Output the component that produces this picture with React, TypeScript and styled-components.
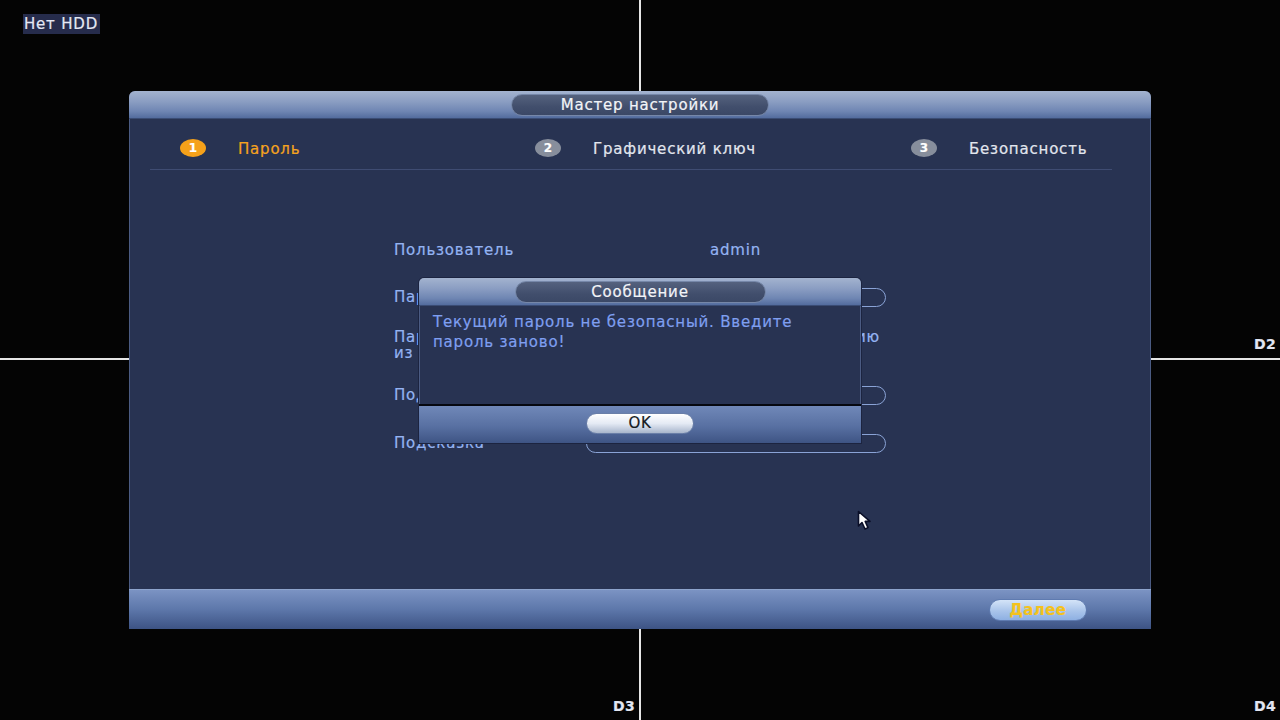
import React from "react";
import styled, {createGlobalStyle} from "styled-components";

const GlobalStyle = createGlobalStyle`
  html, body {
    margin: 0;
    padding: 0;
    background: #000;
  }
  body {
    font-family: "DejaVu Sans", "Liberation Sans", sans-serif;
    letter-spacing: 0.8px;
    -webkit-text-stroke: 0.2px currentColor;
  }
`;

const steps = [
  {num: 1, label: "Пароль", active: true},
  {num: 2, label: "Графический ключ", active: false},
  {num: 3, label: "Безопасность", active: false},
];

const Cursor = () => (
  <CursorSvg width="20" height="22" viewBox="0 0 20 22">
    <path
      d="M1.5 1.5 L1.5 16 L5 12.5 L8 19 L11 17.6 L8.2 11.4 L13 11.4 Z"
      fill="#fff"
      stroke="#0a0f28"
      strokeWidth="1.6"
      strokeLinejoin="round"
    />
  </CursorSvg>
);

export default function App() {
  return (
    <>
      <GlobalStyle />
      <Screen>
        <VideoGrid>
          <Cell $top>
            <NoHdd>Нет HDD</NoHdd>
            <ChannelLabel>D1</ChannelLabel>
          </Cell>
          <Cell>
            <ChannelLabel>D2</ChannelLabel>
          </Cell>
          <Cell>
            <ChannelLabel>D3</ChannelLabel>
          </Cell>
          <Cell>
            <ChannelLabel>D4</ChannelLabel>
          </Cell>
        </VideoGrid>

        <Overlay>
          <Wizard>
            <TitleBar>
              <TitlePill $width={258}>Мастер настройки</TitlePill>
            </TitleBar>

            <WizardBody>
              <Steps>
                {steps.map((step) => (
                  <Step key={step.num}>
                    <StepNum $active={step.active}>{step.num}</StepNum>
                    <StepLabel $active={step.active}>{step.label}</StepLabel>
                  </Step>
                ))}
              </Steps>

              <Form>
                <Row $height={46}>
                  <Label>Пользователь</Label>
                  <Value>admin</Value>
                </Row>
                <Row $height={48}>
                  <Label>Пароль</Label>
                  <Field />
                </Row>
                <HintRow>
                  <HintLine>Пароль: 8-32 символа, используйте комбинацию</HintLine>
                  из цифр, букв и спецсимволов
                </HintRow>
                <Row $height={48}>
                  <Label>Подтверждение</Label>
                  <Field />
                </Row>
                <Row $height={48}>
                  <Label>Подсказка</Label>
                  <Field />
                </Row>
              </Form>
            </WizardBody>

            <Footer>
              <NextButton>Далее</NextButton>
            </Footer>
          </Wizard>
        </Overlay>

        <Overlay>
          <MessageBox>
            <TitleBar>
              <TitlePill $width={251}>Сообщение</TitlePill>
            </TitleBar>
            <MessageBody>
              Текущий пароль не безопасный. Введите
              <br />
              пароль заново!
            </MessageBody>
            <MessageFooter>
              <OkButton>OK</OkButton>
            </MessageFooter>
          </MessageBox>
        </Overlay>

        <Cursor />
      </Screen>
    </>
  );
}

const Screen = styled.div`
  position: relative;
  width: 1280px;
  height: 720px;
  overflow: hidden;
  background: #000;
`;

const VideoGrid = styled.div`
  display: grid;
  grid-template-columns: 639px 639px;
  grid-template-rows: 358px 360px;
  gap: 2px;
  width: 1280px;
  height: 720px;
  background: #e6e6e6;
`;

const Cell = styled.div<{$top?: boolean}>`
  display: flex;
  flex-direction: column;
  justify-content: ${({$top}) => ($top ? "space-between" : "flex-end")};
  align-items: flex-end;
  background: #040404;
  padding: 0 4px 6px 0;
  box-sizing: border-box;
`;

const NoHdd = styled.div`
  align-self: flex-start;
  margin: 14px 0 0 23px;
  padding: 2px 2px 2px 1px;
  background: #262c4c;
  color: #e4e8f4;
  font-size: 15px;
  line-height: 16px;
`;

const ChannelLabel = styled.div`
  color: #e2e6f2;
  font-size: 14px;
  font-weight: bold;
  line-height: 16px;
  letter-spacing: 0.3px;
`;

const Overlay = styled.div`
  position: absolute;
  inset: 0;
  display: flex;
  align-items: center;
  justify-content: center;
`;

const Wizard = styled.div`
  display: flex;
  flex-direction: column;
  width: 1022px;
  height: 538px;
  border-radius: 6px 6px 0 0;
  overflow: hidden;
  background: #283352;
`;

const TitleBar = styled.div`
  display: flex;
  justify-content: center;
  flex: 0 0 28px;
  padding-top: 3px;
  box-sizing: border-box;
  background: linear-gradient(
    to bottom,
    #a3b3cf 0%,
    #8a9dc2 40%,
    #6f86b3 75%,
    #536c9e 100%
  );
  border-bottom: 1px solid #3a4c74;
`;

const TitlePill = styled.div<{$width: number}>`
  width: ${({$width}) => $width}px;
  height: 22px;
  border-radius: 11px;
  box-sizing: border-box;
  border: 1px solid #7687a8;
  background: linear-gradient(to bottom, #55627e 0%, #414e6c 60%, #3b4866 100%);
  color: #f2f4f8;
  font-size: 15px;
  line-height: 20px;
  text-align: center;
`;

const WizardBody = styled.div`
  flex: 1;
  display: flex;
  flex-direction: column;
  border-left: 1px solid #4b5b82;
  border-right: 1px solid #4b5b82;
`;

const Steps = styled.div`
  display: grid;
  grid-template-columns: 355px 376px auto;
  margin: 0 38px 0 20px;
  padding: 20px 0 0 30px;
  height: 51px;
  box-sizing: border-box;
  border-bottom: 1px solid #3f4c72;
`;

const Step = styled.div`
  display: flex;
  align-items: flex-start;
`;

const StepNum = styled.div<{$active: boolean}>`
  width: 26px;
  height: 18px;
  border-radius: 50%;
  background: ${({$active}) => ($active ? "#f5a11a" : "#878e9c")};
  color: #fff;
  font-size: 12px;
  font-weight: bold;
  line-height: 18px;
  letter-spacing: 0;
  text-align: center;
`;

const StepLabel = styled.div<{$active: boolean}>`
  margin-left: 32px;
  color: ${({$active}) => ($active ? "#f5a31e" : "#e2e6ee")};
  font-size: 15px;
  line-height: 20px;
`;

const Form = styled.div`
  display: flex;
  flex-direction: column;
  margin: 57px 0 0 264px;
  width: 500px;
`;

const Row = styled.div<{$height: number}>`
  display: flex;
  align-items: center;
  height: ${({$height}) => $height}px;
`;

const Label = styled.div`
  width: 192px;
  color: #94b3f2;
  font-size: 15px;
`;

const Value = styled.div`
  margin-left: 124px;
  color: #94b3f2;
  font-size: 15px;
`;

const Field = styled.div`
  width: 300px;
  height: 19px;
  box-sizing: border-box;
  border: 1.5px solid #8aa3d6;
  border-radius: 10px;
`;

const HintRow = styled.div`
  width: 486px;
  padding: 8px 0 10px;
  color: #94b3f2;
  font-size: 15px;
  line-height: 16px;
`;

const HintLine = styled.span`
  display: block;
  text-align: justify;
  text-align-last: justify;
  white-space: nowrap;
`;

const Footer = styled.div`
  display: flex;
  align-items: center;
  justify-content: flex-end;
  flex: 0 0 40px;
  padding-right: 64px;
  box-sizing: border-box;
  border-top: 1px solid #8ea4cc;
  background: linear-gradient(to bottom, #7b93c3 0%, #5d77aa 50%, #3d5384 100%);
`;

const NextButton = styled.div`
  width: 98px;
  height: 22px;
  border-radius: 11px;
  box-sizing: border-box;
  border: 1px solid #5f7bb0;
  background: linear-gradient(to bottom, #d4e4f8 0%, #a9c4ea 55%, #8eb0e2 100%);
  color: #f4c21c;
  font-size: 15px;
  font-weight: bold;
  line-height: 20px;
  letter-spacing: 0.4px;
  text-align: center;
`;

const MessageBox = styled.div`
  display: flex;
  flex-direction: column;
  width: 442px;
  height: 165px;
  border-radius: 5px 5px 0 0;
  overflow: hidden;
  background: #283352;
  box-shadow: 0 0 0 1px #1c2440;
`;

const MessageBody = styled.div`
  flex: 1;
  padding: 6px 12px 0 13px;
  border-left: 1px solid #4b5b82;
  border-right: 1px solid #4b5b82;
  color: #7f9ff0;
  font-size: 15px;
  line-height: 20px;
`;

const MessageFooter = styled.div`
  display: flex;
  align-items: flex-start;
  justify-content: center;
  flex: 0 0 39px;
  padding: 7px 0 0 0;
  box-sizing: border-box;
  border-top: 2px solid #06080f;
  background: linear-gradient(to bottom, #7088b8 0%, #5870a2 55%, #3e5484 100%);
`;

const OkButton = styled.div`
  width: 108px;
  height: 21px;
  border-radius: 11px;
  box-sizing: border-box;
  border: 1px solid #6a7fa8;
  background: linear-gradient(to bottom, #ffffff 0%, #e4eaf4 50%, #a8b6cc 100%);
  color: #161a22;
  font-size: 15px;
  line-height: 19px;
  text-align: center;
`;

const CursorSvg = styled.svg`
  position: absolute;
  left: 857px;
  top: 510px;
`;
